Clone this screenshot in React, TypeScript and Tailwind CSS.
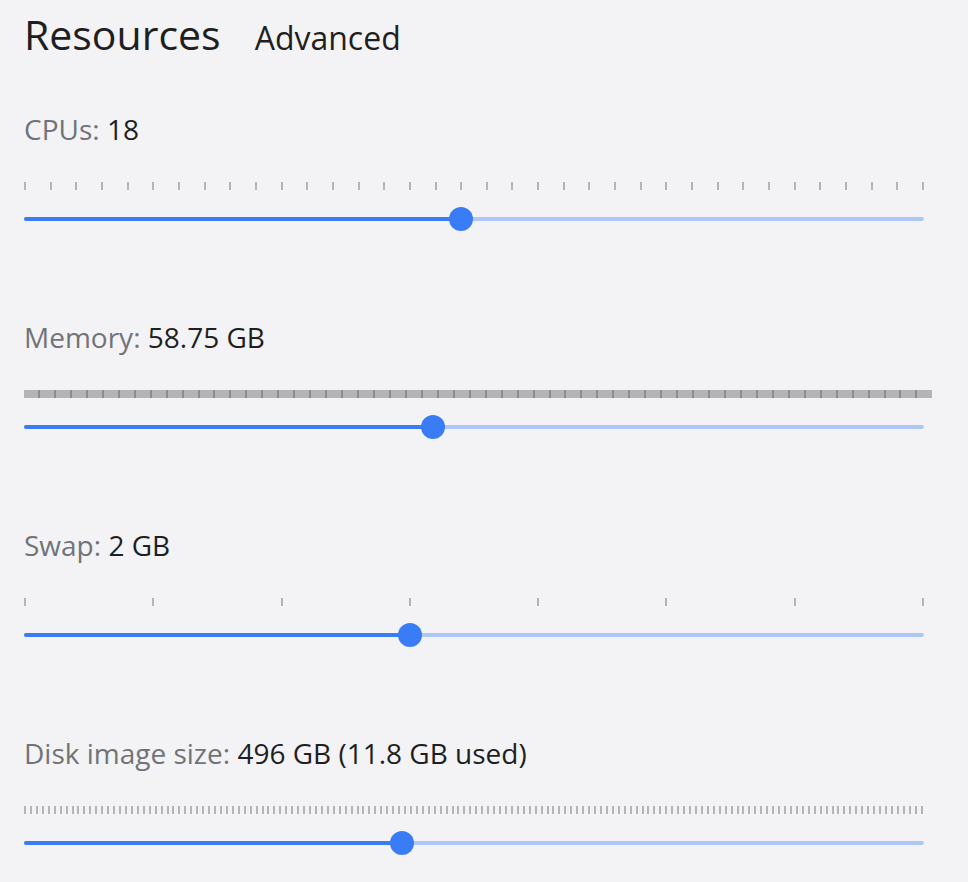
import React from "react";

const FONT = { fontFamily: '"Open Sans", "Noto Sans", sans-serif' };

function Ticks({ count }: { count: number }) {
  return (
    <div className="flex w-[900px] justify-between h-[8px]">
      {Array.from({ length: count }).map((_, i) => (
        <div key={i} className="w-[2px] h-[8px] bg-[#b4b4b4]" />
      ))}
    </div>
  );
}

function MemoryBand() {
  return (
    <div className="flex w-[908px] justify-between h-[8px] bg-[#b4b4b4] px-[14px]">
      {Array.from({ length: 56 }).map((_, i) => (
        <div key={i} className="w-[2px] h-[8px] bg-[#8c8c8c]" />
      ))}
    </div>
  );
}

function Slider({ frac }: { frac: number }) {
  const x = frac * 900;
  return (
    <div className="relative w-[900px] h-[24px]">
      <div className="absolute left-0 right-0 top-[10px] h-[4px] rounded-full bg-[#aec8f5]" />
      <div
        className="absolute left-0 top-[10px] h-[4px] rounded-full bg-[#3a7cf5]"
        style={{ width: x }}
      />
      <div
        className="absolute top-0 w-[24px] h-[24px] rounded-full bg-[#3a7cf5]"
        style={{ left: x - 12 }}
      />
    </div>
  );
}

function Section({
  label,
  value,
  ticks,
  frac,
}: {
  label: string;
  value: string;
  ticks: React.ReactNode;
  frac: number;
}) {
  return (
    <div className="flex flex-col h-[208px]">
      <div className="text-[28px] leading-[36px] whitespace-nowrap">
        <span className="text-[#707478]">{label}: </span>
        <span className="text-[#1f1f21]">{value}</span>
      </div>
      <div className="mt-[35px]">{ticks}</div>
      <div className="mt-[17px]">
        <Slider frac={frac} />
      </div>
    </div>
  );
}

export default function App() {
  return (
    <div className="w-[968px] h-[882px] bg-[#f3f3f6] overflow-hidden pl-[24px] pt-[10px]" style={FONT}>
      <div className="flex items-baseline gap-[34px] h-[48px]">
        <span className="text-[41px] leading-[48px] text-[#1f1f21]">Resources</span>
        <span className="text-[32px] leading-[48px] text-[#1f1f21]">Advanced</span>
      </div>
      <div className="mt-[53px] flex flex-col">
        <Section label="CPUs" value="18" ticks={<Ticks count={36} />} frac={17 / 35} />
        <Section label="Memory" value="58.75 GB" ticks={<MemoryBand />} frac={0.4544} />
        <Section label="Swap" value="2 GB" ticks={<Ticks count={8} />} frac={3 / 7} />
        <Section
          label="Disk image size"
          value="496 GB (11.8 GB used)"
          ticks={<Ticks count={152} />}
          frac={0.42}
        />
      </div>
    </div>
  );
}
